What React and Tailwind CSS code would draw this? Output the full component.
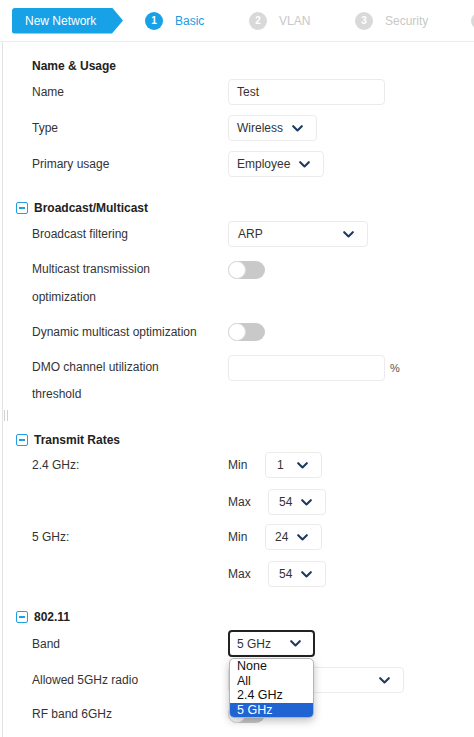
import React from 'react';

const Chevron = () => (
  <svg width="11" height="7" viewBox="0 0 11 7" className="shrink-0">
    <path d="M1.2 1.2 5.5 5.4 9.8 1.2" fill="none" stroke="#1d3a5c" strokeWidth="2.1" strokeLinecap="round" strokeLinejoin="round" />
  </svg>
);

const MinusBox = () => (
  <span className="w-[12px] h-[12px] border-[1.5px] border-[#1ea0e3] rounded-[2px] flex items-center justify-center shrink-0">
    <span className="w-[6px] h-[1.5px] bg-[#1ea0e3]" />
  </span>
);

const Select = ({ value, className = '' }) => (
  <div className={`h-[26px] border border-[#ebebeb] rounded-[4px] bg-white flex items-center justify-between pr-[13px] text-[12px] text-[#333] ${className}`}>
    <span>{value}</span>
    <Chevron />
  </div>
);

const Toggle = () => (
  <div className="w-[37px] h-[18px] rounded-full bg-[#c9c9c9] relative">
    <div className="absolute left-0 top-0 w-[18px] h-[18px] rounded-full bg-white border border-[#dcdcdc]" />
  </div>
);

const SectionTitle = ({ children, icon = true, className = '' }) => (
  <div className={`h-[20px] flex items-center pt-[2px] ${className}`}>
    {icon ? (
      <div className="flex items-center pl-[13px] gap-[6px]">
        <MinusBox />
        <span className="text-[12px] font-bold text-[#222]">{children}</span>
      </div>
    ) : (
      <span className="pl-[29px] text-[12px] font-bold text-[#222]">{children}</span>
    )}
  </div>
);

const Row = ({ label, children, className = '' }) => (
  <div className={`flex items-center h-[26px] pl-[29px] ${className}`}>
    <div className="w-[196px] shrink-0 text-[12px] text-[#333]">{label}</div>
    {children}
  </div>
);

const Step = ({ n, label, active, className = 'w-[104px]' }) => (
  <div className={`${className} shrink-0 flex items-center gap-[12px]`}>
    <span
      className={`w-[18px] h-[18px] rounded-full flex items-center justify-center text-[10px] font-bold text-white ${
        active ? 'bg-[#17a1e6]' : 'bg-[#d9d9d9]'
      }`}
    >
      {n}
    </span>
    <span className={`text-[12px] ${active ? 'text-[#1b9be0]' : 'text-[#c8c8c8]'}`}>{label}</span>
  </div>
);

export default function App() {
  return (
    <div className="w-[474px] h-[737px] overflow-hidden bg-white font-['Liberation_Sans',Arial,sans-serif]">
      {/* Header / stepper */}
      <div className="h-[42px] border-b border-[#ececec] flex items-center pl-[12px] whitespace-nowrap overflow-hidden">
        <div className="h-[26px] w-[111px] shrink-0 bg-[#17a1e6] rounded-l-[3px] [clip-path:polygon(0_0,calc(100%-11px)_0,100%_50%,calc(100%-11px)_100%,0_100%)] flex items-center pl-[13px] text-[12px] text-white">
          New Network
        </div>
        <div className="ml-[22px] flex items-center">
          <Step n={1} label="Basic" active />
          <Step n={2} label="VLAN" className="w-[106px]" />
          <Step n={3} label="Security" className="w-[116px]" />
          <Step n={4} label="" />
        </div>
      </div>

      {/* Body */}
      <div className="relative ml-[2px] border-l border-[#e2e2e2] h-[695px]">
        <div className="absolute left-[1px] top-[368px] flex gap-[2px]">
          <span className="w-[1px] h-[11px] bg-[#d0d0d0]" />
          <span className="w-[1px] h-[11px] bg-[#d0d0d0]" />
        </div>

        <SectionTitle icon={false} className="pt-[15px] h-[33px]">Name &amp; Usage</SectionTitle>
        <Row label="Name" className="mt-[4px]">
          <div className="w-[157px] h-[26px] border border-[#ebebeb] rounded-[4px] flex items-center pl-[8px] text-[12px] text-[#333]">
            Test
          </div>
        </Row>
        <Row label="Type" className="mt-[10px]">
          <Select value="Wireless" className="w-[89px] pl-[8px]" />
        </Row>
        <Row label="Primary usage" className="mt-[10px]">
          <Select value="Employee" className="w-[96px] pl-[8px]" />
        </Row>

        <SectionTitle className="mt-[20px]">Broadcast/Multicast</SectionTitle>
        <Row label="Broadcast filtering" className="mt-[4px]">
          <Select value="ARP" className="w-[140px] pl-[9px]" />
        </Row>
        <div className="flex items-start pl-[29px] mt-[8px]">
          <div className="w-[196px] shrink-0 text-[12px] leading-[28px] text-[#333]">
            Multicast transmission
            <br />
            optimization
          </div>
          <div className="mt-[6px]">
            <Toggle />
          </div>
        </div>
        <div className="flex items-center h-[28px] pl-[29px] mt-[7px]">
          <div className="w-[196px] shrink-0 text-[12px] text-[#333]">Dynamic multicast optimization</div>
          <Toggle />
        </div>
        <div className="flex items-start pl-[29px] mt-[8px]">
          <div className="w-[196px] shrink-0 text-[12px] leading-[27px] text-[#333]">
            DMO channel utilization
            <br />
            threshold
          </div>
          <div className="mt-[1px] flex items-center">
            <div className="w-[157px] h-[26px] border border-[#ebebeb] rounded-[4px]" />
            <span className="ml-[5px] text-[11px] text-[#555]">%</span>
          </div>
        </div>

        <SectionTitle className="mt-[21px]">Transmit Rates</SectionTitle>
        <Row label="2.4 GHz:" className="mt-[3px]">
          <span className="w-[37px] text-[12px] text-[#333]">Min</span>
          <Select value="1" className="w-[57px] pl-[11px]" />
        </Row>
        <Row label="" className="mt-[11px]">
          <span className="w-[40px] text-[12px] text-[#333]">Max</span>
          <Select value="54" className="w-[58px] pl-[10px]" />
        </Row>
        <Row label="5 GHz:" className="mt-[9px]">
          <span className="w-[37px] text-[12px] text-[#333]">Min</span>
          <Select value="24" className="w-[57px] pl-[9px]" />
        </Row>
        <Row label="" className="mt-[11px]">
          <span className="w-[40px] text-[12px] text-[#333]">Max</span>
          <Select value="54" className="w-[58px] pl-[10px]" />
        </Row>

        <SectionTitle className="mt-[19px]">802.11</SectionTitle>
        <div className="flex items-center h-[27px] pl-[29px] mt-[4px]">
          <div className="w-[196px] shrink-0 text-[12px] text-[#333]">Band</div>
          <div className="relative">
            <div className="w-[87px] h-[27px] border-2 border-[#222] rounded-[4px] bg-white flex items-center justify-between pl-[7px] pr-[12px] text-[12px] text-[#333]">
              <span>5 GHz</span>
              <Chevron />
            </div>
            <div className="absolute z-10 left-[1px] top-[28px] w-[85px] bg-white border border-[#b5b5b5] rounded-[5px] shadow-[0_3px_8px_rgba(0,0,0,0.25)] overflow-hidden text-[12.5px] leading-[14.5px] text-[#111]">
              <div className="pl-[7px]">None</div>
              <div className="pl-[7px]">All</div>
              <div className="pl-[7px]">2.4 GHz</div>
              <div className="pl-[7px] bg-[#1f64d2] text-white">5 GHz</div>
            </div>
          </div>
        </div>
        <Row label="Allowed 5GHz radio" className="mt-[10px]">
          <Select value="" className="w-[176px] pl-[9px]" />
        </Row>
        <Row label="RF band 6GHz" className="mt-[8px]">
          <Toggle />
        </Row>
      </div>
    </div>
  );
}
